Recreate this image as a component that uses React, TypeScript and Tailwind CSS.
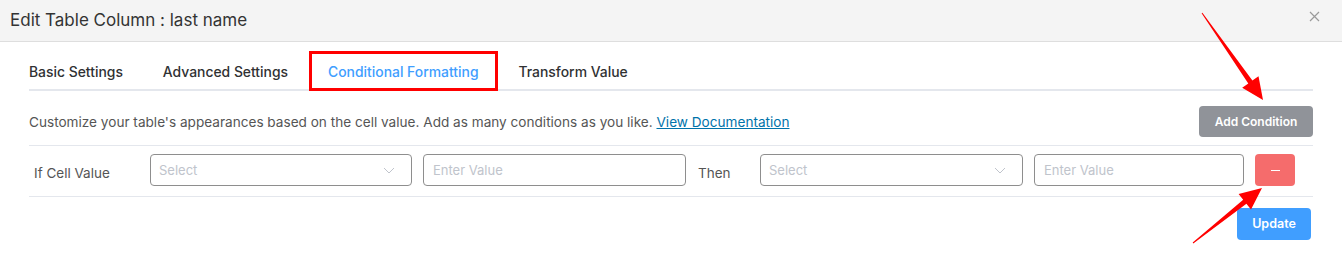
import React from 'react';

const tabs = ['Basic Settings', 'Advanced Settings', 'Conditional Formatting', 'Transform Value'];

const Chevron: React.FC = () => (
  <svg width="12" height="7" viewBox="0 0 12 7" fill="none" className="text-[#c0c4cc]">
    <path d="M1 1l5 5 5-5" stroke="currentColor" strokeWidth="1" />
  </svg>
);

const SelectBox: React.FC<{ width: string }> = ({ width }) => (
  <div className={`${width} h-[32px] flex items-center justify-between pl-[8px] pr-[16px] pt-[1px] border border-[#8e8e8e] rounded-[4px] text-[13px] text-[#c0c4cc]`}>
    <span>Select</span>
    <Chevron />
  </div>
);

const ValueInput: React.FC<{ width: string }> = ({ width }) => (
  <div className={`${width} h-[32px] flex items-center pl-[9px] pt-[1px] border border-[#8e8e8e] rounded-[4px] text-[13px] text-[#c0c4cc]`}>
    Enter Value
  </div>
);

const App: React.FC = () => {
  return (
    <div className="relative w-[1342px] h-[275px] bg-white font-['Inter','Liberation_Sans',sans-serif] overflow-hidden">
      {/* Header */}
      <div className="h-[42px] bg-[#f4f4f4] border-b border-[#dedede] flex items-center justify-between pl-[10px] pr-[22px]">
        <span className="text-[17px] text-[#333]">Edit Table Column : last name</span>
        <svg width="11" height="11" viewBox="0 0 11 11" className="text-[#9a9a9a] -mt-[8px]">
          <path d="M1 1l9 9M10 1l-9 9" stroke="currentColor" strokeWidth="1.2" />
        </svg>
      </div>

      <div className="px-[29px]">
        {/* Tabs */}
        <div className="mt-[9px] h-[40px] flex border-b-2 border-[#e4e7ed]">
          {tabs.map((tab, i) => {
            const active = tab === 'Conditional Formatting';
            return (
              <div
                key={tab}
                className={`relative h-[38px] flex items-center pt-[4px] text-[13.9px] font-medium ${i === 0 ? 'pr-[20px]' : 'px-[20px]'} ${
                  active ? 'text-[#409eff]' : 'text-[#303133]'
                }`}
              >
                {tab}
                {active && (
                  <span className="absolute left-[1px] right-[1px] top-0 -bottom-[2px] border-[3px] border-[#ff0000]" />
                )}
              </div>
            );
          })}
        </div>

        {/* Description */}
        <div className="pt-[15px] pb-[8px] flex items-center justify-between border-b border-[#e4e7ed]">
          <p className="text-[13.6px] text-[#555] pt-[1px]">
            Customize your table's appearances based on the cell value. Add as many conditions as you like.{' '}
            <a className="text-[#0073aa] underline">View Documentation</a>
          </p>
          <button className="w-[114px] h-[31px] rounded-[4px] bg-[#909399] text-white text-[12px] font-semibold">
            Add Condition
          </button>
        </div>

        {/* Condition row */}
        <div className="pt-[8px] pb-[10px] flex items-center gap-[11px] border-b border-[#e4e7ed]">
          <span className="w-[110px] pl-[5px] pt-[6px] text-[13.5px] text-[#555]">If Cell Value</span>
          <SelectBox width="w-[262px]" />
          <ValueInput width="w-[263px]" />
          <span className="w-[52px] pl-[1px] pt-[6px] text-[13.5px] text-[#555]">Then</span>
          <SelectBox width="w-[263px]" />
          <ValueInput width="w-[210px]" />
          <button className="w-[40px] h-[32px] rounded-[4px] bg-[#f56c6c] flex items-center justify-center">
            <span className="block w-[9px] h-[1px] bg-white" />
          </button>
        </div>

        {/* Footer */}
        <div className="mt-[11px] flex justify-end pr-[2px]">
          <button className="w-[74px] h-[32px] rounded-[4px] bg-[#409eff] text-white text-[12.5px] font-semibold">
            Update
          </button>
        </div>
      </div>

      {/* Annotation arrows */}
      <svg className="absolute inset-0 pointer-events-none" width="1342" height="275">
        <polygon
          fill="#ff0000"
          points="1201.6,13.3 1248.3,83.4 1242.2,87.7 1263,100 1258.5,76.2 1252.4,80.5 1202.4,12.7"
        />
        <polygon
          fill="#ff0000"
          points="1193.3,243.4 1246.4,203.7 1251,209.5 1262,188 1238.6,193.9 1243.2,199.7 1192.7,242.6"
        />
      </svg>
    </div>
  );
};

export default App;
